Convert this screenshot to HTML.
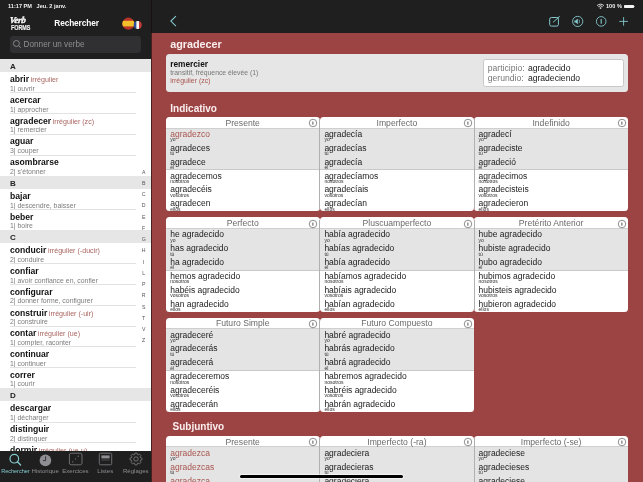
<!DOCTYPE html>
<html><head><meta charset="utf-8"><style>
html,body{margin:0;padding:0;}
body{will-change:transform;width:643px;height:482px;overflow:hidden;position:relative;font-family:"Liberation Sans", sans-serif;background:#9c4444;}
.t{position:absolute;white-space:nowrap;}
.r{position:absolute;}
</style></head><body>
<div class="r" style="left:0.00px;top:0.00px;width:643.00px;height:482.00px;background:#9c4444;"></div>
<div class="r" style="left:0.00px;top:0.00px;width:643.00px;height:33.00px;background:#1f1f1f;"></div>
<div class="r" style="left:0.00px;top:0.00px;width:150.50px;height:482.00px;background:#ffffff;"></div>
<div class="r" style="left:0.00px;top:0.00px;width:150.50px;height:59.20px;background:#1f1f1f;"></div>
<div class="r" style="left:150.70px;top:0.00px;width:1.00px;height:482.00px;background:rgba(20,10,10,0.62);"></div>
<div class="t" style="left:8.00px;top:4.00px;font-size:5.6px;line-height:5.6px;color:#f0f0f0;font-weight:bold;">11:17 PM&nbsp;&nbsp; Jeu. 2 janv.</div>
<div class="t" style="left:606.00px;top:4.00px;font-size:5.6px;line-height:5.6px;color:#f0f0f0;font-weight:bold;">100 %</div>
<svg class="r" style="left:596px;top:3px" width="9" height="6" viewBox="0 0 9 6"><g fill="none" stroke="#f0f0f0" stroke-width="0.9"><path d="M1.1 2.6 A4.8 4.8 0 0 1 7.9 2.6"/><path d="M2.3 3.8 A3.1 3.1 0 0 1 6.7 3.8"/></g><path d="M3.4 4.9 A1.5 1.5 0 0 1 5.6 4.9 L4.5 6 Z" fill="#f0f0f0"/></svg>
<div class="r" style="left:623.80px;top:4.50px;width:10.00px;height:3.60px;background:#f4f4f4;border-radius:0.8px"></div>
<div class="r" style="left:634.40px;top:5.50px;width:0.80px;height:1.60px;background:rgba(255,255,255,0.45);"></div>
<div class="t" style="left:9.30px;top:16.00px;font-size:9.0px;line-height:9.0px;color:#f2f2f2;font-weight:bold;font-family:Liberation Serif,serif;font-style:italic;letter-spacing:-0.3px;transform:skewX(-8deg);transform-origin:0 100%;-webkit-text-stroke:0.35px #fff">Verb</div>
<div class="t" style="left:10.90px;top:24.00px;font-size:7.8px;line-height:7.8px;color:#e8e8e8;font-weight:bold;transform:scaleX(0.69);transform-origin:0 0;-webkit-text-stroke:0.2px #fff">FORMS</div>
<div class="t" style="left:54.30px;top:19.00px;font-size:8.3px;line-height:8.3px;color:#fff;font-weight:bold;letter-spacing:-0.12px">Rechercher</div>
<svg class="r" style="left:120px;top:15px" width="24" height="17" viewBox="0 0 24 17"><defs><clipPath id="es"><circle cx="8.4" cy="8.7" r="6.1"/></clipPath><clipPath id="fr"><circle cx="17.7" cy="10.1" r="4"/></clipPath></defs><g clip-path="url(#es)"><rect x="0" y="0" width="20" height="20" fill="#b8332b"/><rect x="0" y="5.8" width="20" height="5.6" fill="#f2c02a"/></g><g clip-path="url(#fr)"><rect x="13" y="5" width="3.3" height="10" fill="#2a4fa0"/><rect x="16.3" y="5" width="2.8" height="10" fill="#f4f4f4"/><rect x="19.1" y="5" width="4" height="10" fill="#d03a3a"/></g></svg>
<div class="r" style="left:10.00px;top:36.00px;width:131.00px;height:16.50px;background:#303033;border-radius:3.5px"></div>
<svg class="r" style="left:12px;top:39px" width="10" height="10" viewBox="0 0 10 10"><circle cx="4.4" cy="4.5" r="3" fill="none" stroke="#8e8e93" stroke-width="0.9"/><line x1="6.6" y1="6.7" x2="8.8" y2="8.9" stroke="#8e8e93" stroke-width="0.9"/></svg>
<div class="t" style="left:23.60px;top:41.00px;font-size:8.2px;line-height:8.2px;color:#8e8e93;font-weight:normal;">Donner un verbe</div>
<div class="r" style="left:0.00px;top:59.20px;width:150.50px;height:13.00px;background:#e6e6e6;"></div>
<div class="t" style="left:10.00px;top:63.00px;font-size:8.0px;line-height:8.0px;color:#222;font-weight:bold;">A</div>
<div class="t" style="left:10.00px;top:75.00px;font-size:8.6px;line-height:8.6px;color:#111;font-weight:bold;">abrir <span style="font-weight:normal;font-size:7.1px;margin-left:-0.8px;color:#aa6560">irrégulier</span></div>
<div class="t" style="left:10.00px;top:86.00px;font-size:6.9px;line-height:6.9px;color:#7c7c7c;font-weight:normal;">1| ouvrir</div>
<div class="r" style="left:10.00px;top:92.42px;width:126.40px;height:0.50px;background:#e2e2e2;"></div>
<div class="t" style="left:10.00px;top:96.00px;font-size:8.6px;line-height:8.6px;color:#111;font-weight:bold;">acercar</div>
<div class="t" style="left:10.00px;top:107.00px;font-size:6.9px;line-height:6.9px;color:#7c7c7c;font-weight:normal;">1| approcher</div>
<div class="r" style="left:10.00px;top:113.14px;width:126.40px;height:0.50px;background:#e2e2e2;"></div>
<div class="t" style="left:10.00px;top:117.00px;font-size:8.6px;line-height:8.6px;color:#111;font-weight:bold;">agradecer <span style="font-weight:normal;font-size:7.1px;margin-left:-0.8px;color:#aa6560">irrégulier (zc)</span></div>
<div class="t" style="left:10.00px;top:127.00px;font-size:6.9px;line-height:6.9px;color:#7c7c7c;font-weight:normal;">1| remercier</div>
<div class="r" style="left:10.00px;top:133.86px;width:126.40px;height:0.50px;background:#e2e2e2;"></div>
<div class="t" style="left:10.00px;top:137.00px;font-size:8.6px;line-height:8.6px;color:#111;font-weight:bold;">aguar</div>
<div class="t" style="left:10.00px;top:148.00px;font-size:6.9px;line-height:6.9px;color:#7c7c7c;font-weight:normal;">3| couper</div>
<div class="r" style="left:10.00px;top:154.58px;width:126.40px;height:0.50px;background:#e2e2e2;"></div>
<div class="t" style="left:10.00px;top:158.00px;font-size:8.6px;line-height:8.6px;color:#111;font-weight:bold;">asombrarse</div>
<div class="t" style="left:10.00px;top:169.00px;font-size:6.9px;line-height:6.9px;color:#7c7c7c;font-weight:normal;">2| s&#x27;étonner</div>
<div class="r" style="left:0.00px;top:175.80px;width:150.50px;height:13.00px;background:#e6e6e6;"></div>
<div class="t" style="left:10.00px;top:180.00px;font-size:8.0px;line-height:8.0px;color:#222;font-weight:bold;">B</div>
<div class="t" style="left:10.00px;top:192.00px;font-size:8.6px;line-height:8.6px;color:#111;font-weight:bold;">bajar</div>
<div class="t" style="left:10.00px;top:203.00px;font-size:6.9px;line-height:6.9px;color:#7c7c7c;font-weight:normal;">1| descendre, baisser</div>
<div class="r" style="left:10.00px;top:209.02px;width:126.40px;height:0.50px;background:#e2e2e2;"></div>
<div class="t" style="left:10.00px;top:213.00px;font-size:8.6px;line-height:8.6px;color:#111;font-weight:bold;">beber</div>
<div class="t" style="left:10.00px;top:223.00px;font-size:6.9px;line-height:6.9px;color:#7c7c7c;font-weight:normal;">1| boire</div>
<div class="r" style="left:0.00px;top:230.24px;width:150.50px;height:13.00px;background:#e6e6e6;"></div>
<div class="t" style="left:10.00px;top:234.00px;font-size:8.0px;line-height:8.0px;color:#222;font-weight:bold;">C</div>
<div class="t" style="left:10.00px;top:246.00px;font-size:8.6px;line-height:8.6px;color:#111;font-weight:bold;">conducir <span style="font-weight:normal;font-size:7.1px;margin-left:-0.8px;color:#aa6560">irrégulier (-ducir)</span></div>
<div class="t" style="left:10.00px;top:257.00px;font-size:6.9px;line-height:6.9px;color:#7c7c7c;font-weight:normal;">2| conduire</div>
<div class="r" style="left:10.00px;top:263.46px;width:126.40px;height:0.50px;background:#e2e2e2;"></div>
<div class="t" style="left:10.00px;top:267.00px;font-size:8.6px;line-height:8.6px;color:#111;font-weight:bold;">confiar</div>
<div class="t" style="left:10.00px;top:278.00px;font-size:6.9px;line-height:6.9px;color:#7c7c7c;font-weight:normal;">1| avoir confiance en, confier</div>
<div class="r" style="left:10.00px;top:284.18px;width:126.40px;height:0.50px;background:#e2e2e2;"></div>
<div class="t" style="left:10.00px;top:288.00px;font-size:8.6px;line-height:8.6px;color:#111;font-weight:bold;">configurar</div>
<div class="t" style="left:10.00px;top:298.00px;font-size:6.9px;line-height:6.9px;color:#7c7c7c;font-weight:normal;">2| donner forme, configurer</div>
<div class="r" style="left:10.00px;top:304.90px;width:126.40px;height:0.50px;background:#e2e2e2;"></div>
<div class="t" style="left:10.00px;top:309.00px;font-size:8.6px;line-height:8.6px;color:#111;font-weight:bold;">construir <span style="font-weight:normal;font-size:7.1px;margin-left:-0.8px;color:#aa6560">irrégulier (-uir)</span></div>
<div class="t" style="left:10.00px;top:319.00px;font-size:6.9px;line-height:6.9px;color:#7c7c7c;font-weight:normal;">2| construire</div>
<div class="r" style="left:10.00px;top:325.62px;width:126.40px;height:0.50px;background:#e2e2e2;"></div>
<div class="t" style="left:10.00px;top:329.00px;font-size:8.6px;line-height:8.6px;color:#111;font-weight:bold;">contar <span style="font-weight:normal;font-size:7.1px;margin-left:-0.8px;color:#aa6560">irrégulier (ue)</span></div>
<div class="t" style="left:10.00px;top:340.00px;font-size:6.9px;line-height:6.9px;color:#7c7c7c;font-weight:normal;">1| compter, raconter</div>
<div class="r" style="left:10.00px;top:346.34px;width:126.40px;height:0.50px;background:#e2e2e2;"></div>
<div class="t" style="left:10.00px;top:350.00px;font-size:8.6px;line-height:8.6px;color:#111;font-weight:bold;">continuar</div>
<div class="t" style="left:10.00px;top:361.00px;font-size:6.9px;line-height:6.9px;color:#7c7c7c;font-weight:normal;">1| continuer</div>
<div class="r" style="left:10.00px;top:367.06px;width:126.40px;height:0.50px;background:#e2e2e2;"></div>
<div class="t" style="left:10.00px;top:371.00px;font-size:8.6px;line-height:8.6px;color:#111;font-weight:bold;">correr</div>
<div class="t" style="left:10.00px;top:381.00px;font-size:6.9px;line-height:6.9px;color:#7c7c7c;font-weight:normal;">1| courir</div>
<div class="r" style="left:0.00px;top:388.28px;width:150.50px;height:13.00px;background:#e6e6e6;"></div>
<div class="t" style="left:10.00px;top:392.00px;font-size:8.0px;line-height:8.0px;color:#222;font-weight:bold;">D</div>
<div class="t" style="left:10.00px;top:404.00px;font-size:8.6px;line-height:8.6px;color:#111;font-weight:bold;">descargar</div>
<div class="t" style="left:10.00px;top:415.00px;font-size:6.9px;line-height:6.9px;color:#7c7c7c;font-weight:normal;">1| décharger</div>
<div class="r" style="left:10.00px;top:421.50px;width:126.40px;height:0.50px;background:#e2e2e2;"></div>
<div class="t" style="left:10.00px;top:425.00px;font-size:8.6px;line-height:8.6px;color:#111;font-weight:bold;">distinguir</div>
<div class="t" style="left:10.00px;top:436.00px;font-size:6.9px;line-height:6.9px;color:#7c7c7c;font-weight:normal;">2| distinguer</div>
<div class="r" style="left:10.00px;top:442.22px;width:126.40px;height:0.50px;background:#e2e2e2;"></div>
<div class="t" style="left:10.00px;top:446.00px;font-size:8.6px;line-height:8.6px;color:#111;font-weight:bold;">dormir <span style="font-weight:normal;font-size:7.1px;margin-left:-0.8px;color:#aa6560">irrégulier (ue-u)</span></div>
<div class="t" style="left:10.00px;top:456.00px;font-size:6.9px;line-height:6.9px;color:#7c7c7c;font-weight:normal;">1| dormir</div>
<div class="t" style="left:43.70px;width:200px;text-align:center;top:170.00px;font-size:5.2px;line-height:5.2px;color:#555;font-weight:normal;">A</div>
<div class="t" style="left:43.70px;width:200px;text-align:center;top:181.00px;font-size:5.2px;line-height:5.2px;color:#555;font-weight:normal;">B</div>
<div class="t" style="left:43.70px;width:200px;text-align:center;top:192.00px;font-size:5.2px;line-height:5.2px;color:#555;font-weight:normal;">C</div>
<div class="t" style="left:43.70px;width:200px;text-align:center;top:203.00px;font-size:5.2px;line-height:5.2px;color:#555;font-weight:normal;">D</div>
<div class="t" style="left:43.70px;width:200px;text-align:center;top:215.00px;font-size:5.2px;line-height:5.2px;color:#555;font-weight:normal;">E</div>
<div class="t" style="left:43.70px;width:200px;text-align:center;top:226.00px;font-size:5.2px;line-height:5.2px;color:#555;font-weight:normal;">F</div>
<div class="t" style="left:43.70px;width:200px;text-align:center;top:237.00px;font-size:5.2px;line-height:5.2px;color:#555;font-weight:normal;">G</div>
<div class="t" style="left:43.70px;width:200px;text-align:center;top:248.00px;font-size:5.2px;line-height:5.2px;color:#555;font-weight:normal;">H</div>
<div class="t" style="left:43.70px;width:200px;text-align:center;top:260.00px;font-size:5.2px;line-height:5.2px;color:#555;font-weight:normal;">I</div>
<div class="t" style="left:43.70px;width:200px;text-align:center;top:271.00px;font-size:5.2px;line-height:5.2px;color:#555;font-weight:normal;">L</div>
<div class="t" style="left:43.70px;width:200px;text-align:center;top:282.00px;font-size:5.2px;line-height:5.2px;color:#555;font-weight:normal;">P</div>
<div class="t" style="left:43.70px;width:200px;text-align:center;top:293.00px;font-size:5.2px;line-height:5.2px;color:#555;font-weight:normal;">R</div>
<div class="t" style="left:43.70px;width:200px;text-align:center;top:305.00px;font-size:5.2px;line-height:5.2px;color:#555;font-weight:normal;">S</div>
<div class="t" style="left:43.70px;width:200px;text-align:center;top:316.00px;font-size:5.2px;line-height:5.2px;color:#555;font-weight:normal;">T</div>
<div class="t" style="left:43.70px;width:200px;text-align:center;top:327.00px;font-size:5.2px;line-height:5.2px;color:#555;font-weight:normal;">V</div>
<div class="t" style="left:43.70px;width:200px;text-align:center;top:338.00px;font-size:5.2px;line-height:5.2px;color:#555;font-weight:normal;">Z</div>
<div class="r" style="left:0.00px;top:451.00px;width:150.50px;height:31.00px;background:#1f1f1f;"></div>
<div class="t" style="left:-84.60px;width:200px;text-align:center;top:469.00px;font-size:5.6px;line-height:5.6px;color:#84c9ce;font-weight:normal;letter-spacing:-0.05px">Rechercher</div>
<div class="t" style="left:-54.90px;width:200px;text-align:center;top:468.00px;font-size:6.1px;line-height:6.1px;color:#8e8e93;font-weight:normal;">Historique</div>
<div class="t" style="left:-24.60px;width:200px;text-align:center;top:468.00px;font-size:6.1px;line-height:6.1px;color:#8e8e93;font-weight:normal;">Exercices</div>
<div class="t" style="left:5.30px;width:200px;text-align:center;top:468.00px;font-size:6.1px;line-height:6.1px;color:#8e8e93;font-weight:normal;">Listes</div>
<div class="t" style="left:35.80px;width:200px;text-align:center;top:468.00px;font-size:6.1px;line-height:6.1px;color:#8e8e93;font-weight:normal;">Réglages</div>
<svg class="r" style="left:8px;top:452px" width="15" height="15" viewBox="0 0 15 15"><circle cx="6.3" cy="6.7" r="4.3" fill="none" stroke="#84c9ce" stroke-width="1.2"/><line x1="9.4" y1="9.8" x2="12.6" y2="13" stroke="#84c9ce" stroke-width="1.3" stroke-linecap="round"/></svg>
<svg class="r" style="left:39px;top:453.5px" width="13" height="13" viewBox="0 0 13 13"><circle cx="6.4" cy="6.4" r="5.8" fill="#8e8e93"/><path d="M6.6 2.4 V6.6 H4.0" fill="none" stroke="#2a2a2a" stroke-width="0.9"/></svg>
<svg class="r" style="left:68px;top:452px" width="15" height="14" viewBox="0 0 15 14"><rect x="1.4" y="1.2" width="12.6" height="11.6" rx="1.8" fill="none" stroke="#6e6e72" stroke-width="1"/><circle cx="10.2" cy="4.2" r="0.6" fill="#8e8e93"/><circle cx="7.6" cy="7" r="0.6" fill="#8e8e93"/><circle cx="4.8" cy="9.8" r="0.6" fill="#8e8e93"/></svg>
<svg class="r" style="left:98px;top:452px" width="15" height="14" viewBox="0 0 15 14"><rect x="1.3" y="1.2" width="12.4" height="11.6" rx="1.2" fill="none" stroke="#6e6e72" stroke-width="1"/><rect x="3.4" y="3.4" width="8.2" height="3" fill="#8e8e93"/><line x1="3.4" y1="8" x2="11.6" y2="8" stroke="#6e6e72" stroke-width="0.6"/></svg>
<svg class="r" style="left:128.6px;top:452px" width="14" height="14" viewBox="-7 -7 14 14"><g fill="none" stroke="#77777b" stroke-width="0.9" stroke-linejoin="round"><circle r="2.2"/><path d="M4.39 -1.36 L5.91 -1.02 L5.91 1.02 L4.39 1.36 L4.07 2.15 L4.90 3.46 L3.46 4.90 L2.15 4.07 L1.36 4.39 L1.02 5.91 L-1.02 5.91 L-1.36 4.39 L-2.15 4.07 L-3.46 4.90 L-4.90 3.46 L-4.07 2.15 L-4.39 1.36 L-5.91 1.02 L-5.91 -1.02 L-4.39 -1.36 L-4.07 -2.15 L-4.90 -3.46 L-3.46 -4.90 L-2.15 -4.07 L-1.36 -4.39 L-1.02 -5.91 L1.02 -5.91 L1.36 -4.39 L2.15 -4.07 L3.46 -4.90 L4.90 -3.46 L4.07 -2.15 Z"/></g></svg>
<svg class="r" style="left:168px;top:14px" width="10" height="14" viewBox="0 0 10 14"><path d="M7.9 2.1 L2.9 7.1 L7.9 12.1" fill="none" stroke="#84c9ce" stroke-width="1.1"/></svg>
<svg class="r" style="left:546px;top:14px" width="16" height="15" viewBox="546 14 16 15"><rect x="549.7" y="17.5" width="8.7" height="8.6" rx="1.6" fill="none" stroke="#84c9ce" stroke-width="1"/><path d="M553.1 22.3 L559.7 16.3" stroke="#84c9ce" stroke-width="1"/></svg>
<svg class="r" style="left:570px;top:14px" width="16" height="16" viewBox="570 14 16 16"><circle cx="577.7" cy="21.4" r="5.1" fill="none" stroke="#84c9ce" stroke-width="0.9"/><path d="M574.4 20.4 H575.6 L577.8 18.6 V24.2 L575.6 22.4 H574.4 Z" fill="#84c9ce"/><path d="M579 19.6 Q580.1 21.4 579 23.2" fill="none" stroke="#84c9ce" stroke-width="0.7"/></svg>
<svg class="r" style="left:594px;top:14px" width="16" height="16" viewBox="594 14 16 16"><circle cx="601.2" cy="21.4" r="4.8" fill="none" stroke="#84c9ce" stroke-width="0.9"/><line x1="601.2" y1="19.0" x2="601.2" y2="23.8" stroke="#84c9ce" stroke-width="1.1"/></svg>
<svg class="r" style="left:617px;top:14px" width="14" height="14" viewBox="617 14 14 14"><path d="M623.6 17.1 V25.7 M619.3 21.4 H627.9" stroke="#84c9ce" stroke-width="0.9"/></svg>
<div class="t" style="left:170.20px;top:39.00px;font-size:10.8px;line-height:10.8px;color:#fbeeee;font-weight:bold;">agradecer</div>
<div class="r" style="left:165.60px;top:54.10px;width:462.60px;height:37.80px;background:#e6e6e6;border-radius:3.5px"></div>
<div class="t" style="left:170.20px;top:60.00px;font-size:8.3px;line-height:8.3px;color:#111;font-weight:bold;">remercier</div>
<div class="t" style="left:170.20px;top:70.00px;font-size:6.8px;line-height:6.8px;color:#777;font-weight:normal;">transitif, fréquence élevée (1)</div>
<div class="t" style="left:170.20px;top:78.00px;font-size:6.9px;line-height:6.9px;color:#a8554f;font-weight:normal;">irrégulier (zc)</div>
<div class="r" style="left:483.00px;top:59.00px;width:140.90px;height:28.20px;background:#ffffff;border:0.6px solid #c8c8c8;border-radius:2.5px;box-sizing:border-box"></div>
<div class="t" style="left:487.80px;top:64.00px;font-size:8.6px;line-height:8.6px;color:#777;font-weight:normal;">participio:</div>
<div class="t" style="left:527.90px;top:64.00px;font-size:8.6px;line-height:8.6px;color:#1a1a1a;font-weight:normal;">agradecido</div>
<div class="t" style="left:487.80px;top:74.00px;font-size:8.6px;line-height:8.6px;color:#777;font-weight:normal;">gerundio:</div>
<div class="t" style="left:527.90px;top:74.00px;font-size:8.6px;line-height:8.6px;color:#1a1a1a;font-weight:normal;">agradeciendo</div>
<div class="t" style="left:170.30px;top:104.00px;font-size:10.0px;line-height:10.0px;color:#fbeeee;font-weight:bold;">Indicativo</div>
<div class="t" style="left:172.50px;top:422.00px;font-size:10.0px;line-height:10.0px;color:#fbeeee;font-weight:bold;">Subjuntivo</div>
<div class="r" style="left:165.60px;top:116.90px;width:154.20px;height:94.42px;background:#fff;border-radius:3.5px;overflow:hidden">
<div class="r" style="left:0;top:11.20px;width:154.2px;height:41.61px;background:#e4e4e4"></div>
<div class="r" style="left:0;top:10.70px;width:154.2px;height:0.5px;background:#cfcfcf"></div>
<div class="r" style="left:0;top:52.51px;width:154.2px;height:0.6px;background:#c9c9c9"></div>
</div>
<div class="t" style="left:142.70px;width:200px;text-align:center;top:119.00px;font-size:8.6px;line-height:8.6px;color:#6a6a6a;font-weight:normal;">Presente</div>
<svg class="r" style="left:308.40px;top:118.40px" width="10" height="10" viewBox="0 0 10 10"><circle cx="5" cy="5" r="3.75" fill="none" stroke="#6a6a6a" stroke-width="0.75"/><line x1="4.9" y1="3.6" x2="4.9" y2="6.7" stroke="#555" stroke-width="1.0"/></svg>
<div class="t" style="left:170.20px;top:130.00px;font-size:8.5px;line-height:8.5px;color:#a8554f;font-weight:normal;">agradezco</div>
<div class="t" style="left:170.20px;top:137.00px;font-size:5.0px;line-height:5.0px;color:#2e2e2e;font-weight:normal;">yo</div>
<div class="t" style="left:170.20px;top:144.00px;font-size:8.5px;line-height:8.5px;color:#1a1a1a;font-weight:normal;">agradeces</div>
<div class="t" style="left:170.20px;top:151.00px;font-size:5.0px;line-height:5.0px;color:#2e2e2e;font-weight:normal;">tú</div>
<div class="t" style="left:170.20px;top:158.00px;font-size:8.5px;line-height:8.5px;color:#1a1a1a;font-weight:normal;">agradece</div>
<div class="t" style="left:170.20px;top:165.00px;font-size:5.0px;line-height:5.0px;color:#2e2e2e;font-weight:normal;">él</div>
<div class="t" style="left:170.20px;top:172.00px;font-size:8.5px;line-height:8.5px;color:#1a1a1a;font-weight:normal;">agradecemos</div>
<div class="t" style="left:170.20px;top:179.00px;font-size:5.0px;line-height:5.0px;color:#2e2e2e;font-weight:normal;">nosotros</div>
<div class="t" style="left:170.20px;top:185.00px;font-size:8.5px;line-height:8.5px;color:#1a1a1a;font-weight:normal;">agradecéis</div>
<div class="t" style="left:170.20px;top:193.00px;font-size:5.0px;line-height:5.0px;color:#2e2e2e;font-weight:normal;">vosotros</div>
<div class="t" style="left:170.20px;top:199.00px;font-size:8.5px;line-height:8.5px;color:#1a1a1a;font-weight:normal;">agradecen</div>
<div class="t" style="left:170.20px;top:207.00px;font-size:5.0px;line-height:5.0px;color:#2e2e2e;font-weight:normal;">ellos</div>
<div class="r" style="left:319.80px;top:116.90px;width:154.20px;height:94.42px;background:#fff;border-radius:3.5px;overflow:hidden">
<div class="r" style="left:0;top:11.20px;width:154.2px;height:41.61px;background:#e4e4e4"></div>
<div class="r" style="left:0;top:10.70px;width:154.2px;height:0.5px;background:#cfcfcf"></div>
<div class="r" style="left:0;top:52.51px;width:154.2px;height:0.6px;background:#c9c9c9"></div>
</div>
<div class="t" style="left:296.90px;width:200px;text-align:center;top:119.00px;font-size:8.6px;line-height:8.6px;color:#6a6a6a;font-weight:normal;">Imperfecto</div>
<svg class="r" style="left:462.60px;top:118.40px" width="10" height="10" viewBox="0 0 10 10"><circle cx="5" cy="5" r="3.75" fill="none" stroke="#6a6a6a" stroke-width="0.75"/><line x1="4.9" y1="3.6" x2="4.9" y2="6.7" stroke="#555" stroke-width="1.0"/></svg>
<div class="t" style="left:324.40px;top:130.00px;font-size:8.5px;line-height:8.5px;color:#1a1a1a;font-weight:normal;">agradecía</div>
<div class="t" style="left:324.40px;top:137.00px;font-size:5.0px;line-height:5.0px;color:#2e2e2e;font-weight:normal;">yo</div>
<div class="t" style="left:324.40px;top:144.00px;font-size:8.5px;line-height:8.5px;color:#1a1a1a;font-weight:normal;">agradecías</div>
<div class="t" style="left:324.40px;top:151.00px;font-size:5.0px;line-height:5.0px;color:#2e2e2e;font-weight:normal;">tú</div>
<div class="t" style="left:324.40px;top:158.00px;font-size:8.5px;line-height:8.5px;color:#1a1a1a;font-weight:normal;">agradecía</div>
<div class="t" style="left:324.40px;top:165.00px;font-size:5.0px;line-height:5.0px;color:#2e2e2e;font-weight:normal;">él</div>
<div class="t" style="left:324.40px;top:172.00px;font-size:8.5px;line-height:8.5px;color:#1a1a1a;font-weight:normal;">agradecíamos</div>
<div class="t" style="left:324.40px;top:179.00px;font-size:5.0px;line-height:5.0px;color:#2e2e2e;font-weight:normal;">nosotros</div>
<div class="t" style="left:324.40px;top:185.00px;font-size:8.5px;line-height:8.5px;color:#1a1a1a;font-weight:normal;">agradecíais</div>
<div class="t" style="left:324.40px;top:193.00px;font-size:5.0px;line-height:5.0px;color:#2e2e2e;font-weight:normal;">vosotros</div>
<div class="t" style="left:324.40px;top:199.00px;font-size:8.5px;line-height:8.5px;color:#1a1a1a;font-weight:normal;">agradecían</div>
<div class="t" style="left:324.40px;top:207.00px;font-size:5.0px;line-height:5.0px;color:#2e2e2e;font-weight:normal;">ellos</div>
<div class="r" style="left:474.00px;top:116.90px;width:154.20px;height:94.42px;background:#fff;border-radius:3.5px;overflow:hidden">
<div class="r" style="left:0;top:11.20px;width:154.2px;height:41.61px;background:#e4e4e4"></div>
<div class="r" style="left:0;top:10.70px;width:154.2px;height:0.5px;background:#cfcfcf"></div>
<div class="r" style="left:0;top:52.51px;width:154.2px;height:0.6px;background:#c9c9c9"></div>
</div>
<div class="t" style="left:451.10px;width:200px;text-align:center;top:119.00px;font-size:8.6px;line-height:8.6px;color:#6a6a6a;font-weight:normal;">Indefinido</div>
<svg class="r" style="left:616.80px;top:118.40px" width="10" height="10" viewBox="0 0 10 10"><circle cx="5" cy="5" r="3.75" fill="none" stroke="#6a6a6a" stroke-width="0.75"/><line x1="4.9" y1="3.6" x2="4.9" y2="6.7" stroke="#555" stroke-width="1.0"/></svg>
<div class="t" style="left:478.60px;top:130.00px;font-size:8.5px;line-height:8.5px;color:#1a1a1a;font-weight:normal;">agradecí</div>
<div class="t" style="left:478.60px;top:137.00px;font-size:5.0px;line-height:5.0px;color:#2e2e2e;font-weight:normal;">yo</div>
<div class="t" style="left:478.60px;top:144.00px;font-size:8.5px;line-height:8.5px;color:#1a1a1a;font-weight:normal;">agradeciste</div>
<div class="t" style="left:478.60px;top:151.00px;font-size:5.0px;line-height:5.0px;color:#2e2e2e;font-weight:normal;">tú</div>
<div class="t" style="left:478.60px;top:158.00px;font-size:8.5px;line-height:8.5px;color:#1a1a1a;font-weight:normal;">agradeció</div>
<div class="t" style="left:478.60px;top:165.00px;font-size:5.0px;line-height:5.0px;color:#2e2e2e;font-weight:normal;">él</div>
<div class="t" style="left:478.60px;top:172.00px;font-size:8.5px;line-height:8.5px;color:#1a1a1a;font-weight:normal;">agradecimos</div>
<div class="t" style="left:478.60px;top:179.00px;font-size:5.0px;line-height:5.0px;color:#2e2e2e;font-weight:normal;">nosotros</div>
<div class="t" style="left:478.60px;top:185.00px;font-size:8.5px;line-height:8.5px;color:#1a1a1a;font-weight:normal;">agradecisteis</div>
<div class="t" style="left:478.60px;top:193.00px;font-size:5.0px;line-height:5.0px;color:#2e2e2e;font-weight:normal;">vosotros</div>
<div class="t" style="left:478.60px;top:199.00px;font-size:8.5px;line-height:8.5px;color:#1a1a1a;font-weight:normal;">agradecieron</div>
<div class="t" style="left:478.60px;top:207.00px;font-size:5.0px;line-height:5.0px;color:#2e2e2e;font-weight:normal;">ellos</div>
<div class="r" style="left:319.45px;top:119.10px;width:0.70px;height:90.02px;background:#b0b0b0;"></div>
<div class="r" style="left:473.65px;top:119.10px;width:0.70px;height:90.02px;background:#b0b0b0;"></div>
<div class="r" style="left:165.60px;top:217.30px;width:154.20px;height:94.42px;background:#fff;border-radius:3.5px;overflow:hidden">
<div class="r" style="left:0;top:11.20px;width:154.2px;height:41.61px;background:#e4e4e4"></div>
<div class="r" style="left:0;top:10.70px;width:154.2px;height:0.5px;background:#cfcfcf"></div>
<div class="r" style="left:0;top:52.51px;width:154.2px;height:0.6px;background:#c9c9c9"></div>
</div>
<div class="t" style="left:142.70px;width:200px;text-align:center;top:219.00px;font-size:8.6px;line-height:8.6px;color:#6a6a6a;font-weight:normal;">Perfecto</div>
<svg class="r" style="left:308.40px;top:218.80px" width="10" height="10" viewBox="0 0 10 10"><circle cx="5" cy="5" r="3.75" fill="none" stroke="#6a6a6a" stroke-width="0.75"/><line x1="4.9" y1="3.6" x2="4.9" y2="6.7" stroke="#555" stroke-width="1.0"/></svg>
<div class="t" style="left:170.20px;top:230.00px;font-size:8.5px;line-height:8.5px;color:#1a1a1a;font-weight:normal;">he agradecido</div>
<div class="t" style="left:170.20px;top:238.00px;font-size:5.0px;line-height:5.0px;color:#2e2e2e;font-weight:normal;">yo</div>
<div class="t" style="left:170.20px;top:244.00px;font-size:8.5px;line-height:8.5px;color:#1a1a1a;font-weight:normal;">has agradecido</div>
<div class="t" style="left:170.20px;top:252.00px;font-size:5.0px;line-height:5.0px;color:#2e2e2e;font-weight:normal;">tú</div>
<div class="t" style="left:170.20px;top:258.00px;font-size:8.5px;line-height:8.5px;color:#1a1a1a;font-weight:normal;">ha agradecido</div>
<div class="t" style="left:170.20px;top:265.00px;font-size:5.0px;line-height:5.0px;color:#2e2e2e;font-weight:normal;">él</div>
<div class="t" style="left:170.20px;top:272.00px;font-size:8.5px;line-height:8.5px;color:#1a1a1a;font-weight:normal;">hemos agradecido</div>
<div class="t" style="left:170.20px;top:279.00px;font-size:5.0px;line-height:5.0px;color:#2e2e2e;font-weight:normal;">nosotros</div>
<div class="t" style="left:170.20px;top:286.00px;font-size:8.5px;line-height:8.5px;color:#1a1a1a;font-weight:normal;">habéis agradecido</div>
<div class="t" style="left:170.20px;top:293.00px;font-size:5.0px;line-height:5.0px;color:#2e2e2e;font-weight:normal;">vosotros</div>
<div class="t" style="left:170.20px;top:300.00px;font-size:8.5px;line-height:8.5px;color:#1a1a1a;font-weight:normal;">han agradecido</div>
<div class="t" style="left:170.20px;top:307.00px;font-size:5.0px;line-height:5.0px;color:#2e2e2e;font-weight:normal;">ellos</div>
<div class="r" style="left:319.80px;top:217.30px;width:154.20px;height:94.42px;background:#fff;border-radius:3.5px;overflow:hidden">
<div class="r" style="left:0;top:11.20px;width:154.2px;height:41.61px;background:#e4e4e4"></div>
<div class="r" style="left:0;top:10.70px;width:154.2px;height:0.5px;background:#cfcfcf"></div>
<div class="r" style="left:0;top:52.51px;width:154.2px;height:0.6px;background:#c9c9c9"></div>
</div>
<div class="t" style="left:296.90px;width:200px;text-align:center;top:219.00px;font-size:8.6px;line-height:8.6px;color:#6a6a6a;font-weight:normal;">Pluscuamperfecto</div>
<svg class="r" style="left:462.60px;top:218.80px" width="10" height="10" viewBox="0 0 10 10"><circle cx="5" cy="5" r="3.75" fill="none" stroke="#6a6a6a" stroke-width="0.75"/><line x1="4.9" y1="3.6" x2="4.9" y2="6.7" stroke="#555" stroke-width="1.0"/></svg>
<div class="t" style="left:324.40px;top:230.00px;font-size:8.5px;line-height:8.5px;color:#1a1a1a;font-weight:normal;">había agradecido</div>
<div class="t" style="left:324.40px;top:238.00px;font-size:5.0px;line-height:5.0px;color:#2e2e2e;font-weight:normal;">yo</div>
<div class="t" style="left:324.40px;top:244.00px;font-size:8.5px;line-height:8.5px;color:#1a1a1a;font-weight:normal;">habías agradecido</div>
<div class="t" style="left:324.40px;top:252.00px;font-size:5.0px;line-height:5.0px;color:#2e2e2e;font-weight:normal;">tú</div>
<div class="t" style="left:324.40px;top:258.00px;font-size:8.5px;line-height:8.5px;color:#1a1a1a;font-weight:normal;">había agradecido</div>
<div class="t" style="left:324.40px;top:265.00px;font-size:5.0px;line-height:5.0px;color:#2e2e2e;font-weight:normal;">él</div>
<div class="t" style="left:324.40px;top:272.00px;font-size:8.5px;line-height:8.5px;color:#1a1a1a;font-weight:normal;">habíamos agradecido</div>
<div class="t" style="left:324.40px;top:279.00px;font-size:5.0px;line-height:5.0px;color:#2e2e2e;font-weight:normal;">nosotros</div>
<div class="t" style="left:324.40px;top:286.00px;font-size:8.5px;line-height:8.5px;color:#1a1a1a;font-weight:normal;">habíais agradecido</div>
<div class="t" style="left:324.40px;top:293.00px;font-size:5.0px;line-height:5.0px;color:#2e2e2e;font-weight:normal;">vosotros</div>
<div class="t" style="left:324.40px;top:300.00px;font-size:8.5px;line-height:8.5px;color:#1a1a1a;font-weight:normal;">habían agradecido</div>
<div class="t" style="left:324.40px;top:307.00px;font-size:5.0px;line-height:5.0px;color:#2e2e2e;font-weight:normal;">ellos</div>
<div class="r" style="left:474.00px;top:217.30px;width:154.20px;height:94.42px;background:#fff;border-radius:3.5px;overflow:hidden">
<div class="r" style="left:0;top:11.20px;width:154.2px;height:41.61px;background:#e4e4e4"></div>
<div class="r" style="left:0;top:10.70px;width:154.2px;height:0.5px;background:#cfcfcf"></div>
<div class="r" style="left:0;top:52.51px;width:154.2px;height:0.6px;background:#c9c9c9"></div>
</div>
<div class="t" style="left:451.10px;width:200px;text-align:center;top:219.00px;font-size:8.6px;line-height:8.6px;color:#6a6a6a;font-weight:normal;">Pretérito Anterior</div>
<svg class="r" style="left:616.80px;top:218.80px" width="10" height="10" viewBox="0 0 10 10"><circle cx="5" cy="5" r="3.75" fill="none" stroke="#6a6a6a" stroke-width="0.75"/><line x1="4.9" y1="3.6" x2="4.9" y2="6.7" stroke="#555" stroke-width="1.0"/></svg>
<div class="t" style="left:478.60px;top:230.00px;font-size:8.5px;line-height:8.5px;color:#1a1a1a;font-weight:normal;">hube agradecido</div>
<div class="t" style="left:478.60px;top:238.00px;font-size:5.0px;line-height:5.0px;color:#2e2e2e;font-weight:normal;">yo</div>
<div class="t" style="left:478.60px;top:244.00px;font-size:8.5px;line-height:8.5px;color:#1a1a1a;font-weight:normal;">hubiste agradecido</div>
<div class="t" style="left:478.60px;top:252.00px;font-size:5.0px;line-height:5.0px;color:#2e2e2e;font-weight:normal;">tú</div>
<div class="t" style="left:478.60px;top:258.00px;font-size:8.5px;line-height:8.5px;color:#1a1a1a;font-weight:normal;">hubo agradecido</div>
<div class="t" style="left:478.60px;top:265.00px;font-size:5.0px;line-height:5.0px;color:#2e2e2e;font-weight:normal;">él</div>
<div class="t" style="left:478.60px;top:272.00px;font-size:8.5px;line-height:8.5px;color:#1a1a1a;font-weight:normal;">hubimos agradecido</div>
<div class="t" style="left:478.60px;top:279.00px;font-size:5.0px;line-height:5.0px;color:#2e2e2e;font-weight:normal;">nosotros</div>
<div class="t" style="left:478.60px;top:286.00px;font-size:8.5px;line-height:8.5px;color:#1a1a1a;font-weight:normal;">hubisteis agradecido</div>
<div class="t" style="left:478.60px;top:293.00px;font-size:5.0px;line-height:5.0px;color:#2e2e2e;font-weight:normal;">vosotros</div>
<div class="t" style="left:478.60px;top:300.00px;font-size:8.5px;line-height:8.5px;color:#1a1a1a;font-weight:normal;">hubieron agradecido</div>
<div class="t" style="left:478.60px;top:307.00px;font-size:5.0px;line-height:5.0px;color:#2e2e2e;font-weight:normal;">ellos</div>
<div class="r" style="left:319.45px;top:219.50px;width:0.70px;height:90.02px;background:#b0b0b0;"></div>
<div class="r" style="left:473.65px;top:219.50px;width:0.70px;height:90.02px;background:#b0b0b0;"></div>
<div class="r" style="left:165.60px;top:317.50px;width:154.20px;height:94.42px;background:#fff;border-radius:3.5px;overflow:hidden">
<div class="r" style="left:0;top:11.20px;width:154.2px;height:41.61px;background:#e4e4e4"></div>
<div class="r" style="left:0;top:10.70px;width:154.2px;height:0.5px;background:#cfcfcf"></div>
<div class="r" style="left:0;top:52.51px;width:154.2px;height:0.6px;background:#c9c9c9"></div>
</div>
<div class="t" style="left:142.70px;width:200px;text-align:center;top:319.00px;font-size:8.6px;line-height:8.6px;color:#6a6a6a;font-weight:normal;">Futuro Simple</div>
<svg class="r" style="left:308.40px;top:319.00px" width="10" height="10" viewBox="0 0 10 10"><circle cx="5" cy="5" r="3.75" fill="none" stroke="#6a6a6a" stroke-width="0.75"/><line x1="4.9" y1="3.6" x2="4.9" y2="6.7" stroke="#555" stroke-width="1.0"/></svg>
<div class="t" style="left:170.20px;top:331.00px;font-size:8.5px;line-height:8.5px;color:#1a1a1a;font-weight:normal;">agradeceré</div>
<div class="t" style="left:170.20px;top:338.00px;font-size:5.0px;line-height:5.0px;color:#2e2e2e;font-weight:normal;">yo</div>
<div class="t" style="left:170.20px;top:344.00px;font-size:8.5px;line-height:8.5px;color:#1a1a1a;font-weight:normal;">agradecerás</div>
<div class="t" style="left:170.20px;top:352.00px;font-size:5.0px;line-height:5.0px;color:#2e2e2e;font-weight:normal;">tú</div>
<div class="t" style="left:170.20px;top:358.00px;font-size:8.5px;line-height:8.5px;color:#1a1a1a;font-weight:normal;">agradecerá</div>
<div class="t" style="left:170.20px;top:366.00px;font-size:5.0px;line-height:5.0px;color:#2e2e2e;font-weight:normal;">él</div>
<div class="t" style="left:170.20px;top:372.00px;font-size:8.5px;line-height:8.5px;color:#1a1a1a;font-weight:normal;">agradeceremos</div>
<div class="t" style="left:170.20px;top:380.00px;font-size:5.0px;line-height:5.0px;color:#2e2e2e;font-weight:normal;">nosotros</div>
<div class="t" style="left:170.20px;top:386.00px;font-size:8.5px;line-height:8.5px;color:#1a1a1a;font-weight:normal;">agradeceréis</div>
<div class="t" style="left:170.20px;top:393.00px;font-size:5.0px;line-height:5.0px;color:#2e2e2e;font-weight:normal;">vosotros</div>
<div class="t" style="left:170.20px;top:400.00px;font-size:8.5px;line-height:8.5px;color:#1a1a1a;font-weight:normal;">agradecerán</div>
<div class="t" style="left:170.20px;top:407.00px;font-size:5.0px;line-height:5.0px;color:#2e2e2e;font-weight:normal;">ellos</div>
<div class="r" style="left:319.80px;top:317.50px;width:154.20px;height:94.42px;background:#fff;border-radius:3.5px;overflow:hidden">
<div class="r" style="left:0;top:11.20px;width:154.2px;height:41.61px;background:#e4e4e4"></div>
<div class="r" style="left:0;top:10.70px;width:154.2px;height:0.5px;background:#cfcfcf"></div>
<div class="r" style="left:0;top:52.51px;width:154.2px;height:0.6px;background:#c9c9c9"></div>
</div>
<div class="t" style="left:296.90px;width:200px;text-align:center;top:319.00px;font-size:8.6px;line-height:8.6px;color:#6a6a6a;font-weight:normal;">Futuro Compuesto</div>
<svg class="r" style="left:462.60px;top:319.00px" width="10" height="10" viewBox="0 0 10 10"><circle cx="5" cy="5" r="3.75" fill="none" stroke="#6a6a6a" stroke-width="0.75"/><line x1="4.9" y1="3.6" x2="4.9" y2="6.7" stroke="#555" stroke-width="1.0"/></svg>
<div class="t" style="left:324.40px;top:331.00px;font-size:8.5px;line-height:8.5px;color:#1a1a1a;font-weight:normal;">habré agradecido</div>
<div class="t" style="left:324.40px;top:338.00px;font-size:5.0px;line-height:5.0px;color:#2e2e2e;font-weight:normal;">yo</div>
<div class="t" style="left:324.40px;top:344.00px;font-size:8.5px;line-height:8.5px;color:#1a1a1a;font-weight:normal;">habrás agradecido</div>
<div class="t" style="left:324.40px;top:352.00px;font-size:5.0px;line-height:5.0px;color:#2e2e2e;font-weight:normal;">tú</div>
<div class="t" style="left:324.40px;top:358.00px;font-size:8.5px;line-height:8.5px;color:#1a1a1a;font-weight:normal;">habrá agradecido</div>
<div class="t" style="left:324.40px;top:366.00px;font-size:5.0px;line-height:5.0px;color:#2e2e2e;font-weight:normal;">él</div>
<div class="t" style="left:324.40px;top:372.00px;font-size:8.5px;line-height:8.5px;color:#1a1a1a;font-weight:normal;">habremos agradecido</div>
<div class="t" style="left:324.40px;top:380.00px;font-size:5.0px;line-height:5.0px;color:#2e2e2e;font-weight:normal;">nosotros</div>
<div class="t" style="left:324.40px;top:386.00px;font-size:8.5px;line-height:8.5px;color:#1a1a1a;font-weight:normal;">habréis agradecido</div>
<div class="t" style="left:324.40px;top:393.00px;font-size:5.0px;line-height:5.0px;color:#2e2e2e;font-weight:normal;">vosotros</div>
<div class="t" style="left:324.40px;top:400.00px;font-size:8.5px;line-height:8.5px;color:#1a1a1a;font-weight:normal;">habrán agradecido</div>
<div class="t" style="left:324.40px;top:407.00px;font-size:5.0px;line-height:5.0px;color:#2e2e2e;font-weight:normal;">ellos</div>
<div class="r" style="left:319.45px;top:319.70px;width:0.70px;height:90.02px;background:#b0b0b0;"></div>
<div class="r" style="left:165.60px;top:435.70px;width:154.20px;height:94.42px;background:#fff;border-radius:3.5px;overflow:hidden">
<div class="r" style="left:0;top:11.20px;width:154.2px;height:41.61px;background:#e4e4e4"></div>
<div class="r" style="left:0;top:10.70px;width:154.2px;height:0.5px;background:#cfcfcf"></div>
<div class="r" style="left:0;top:52.51px;width:154.2px;height:0.6px;background:#c9c9c9"></div>
</div>
<div class="t" style="left:142.70px;width:200px;text-align:center;top:438.00px;font-size:8.6px;line-height:8.6px;color:#6a6a6a;font-weight:normal;">Presente</div>
<svg class="r" style="left:308.40px;top:437.20px" width="10" height="10" viewBox="0 0 10 10"><circle cx="5" cy="5" r="3.75" fill="none" stroke="#6a6a6a" stroke-width="0.75"/><line x1="4.9" y1="3.6" x2="4.9" y2="6.7" stroke="#555" stroke-width="1.0"/></svg>
<div class="t" style="left:170.20px;top:449.00px;font-size:8.5px;line-height:8.5px;color:#a8554f;font-weight:normal;">agradezca</div>
<div class="t" style="left:170.20px;top:456.00px;font-size:5.0px;line-height:5.0px;color:#2e2e2e;font-weight:normal;">yo</div>
<div class="t" style="left:170.20px;top:463.00px;font-size:8.5px;line-height:8.5px;color:#a8554f;font-weight:normal;">agradezcas</div>
<div class="t" style="left:170.20px;top:470.00px;font-size:5.0px;line-height:5.0px;color:#2e2e2e;font-weight:normal;">tú</div>
<div class="t" style="left:170.20px;top:477.00px;font-size:8.5px;line-height:8.5px;color:#a8554f;font-weight:normal;">agradezca</div>
<div class="t" style="left:170.20px;top:484.00px;font-size:5.0px;line-height:5.0px;color:#2e2e2e;font-weight:normal;">él</div>
<div class="t" style="left:170.20px;top:490.00px;font-size:8.5px;line-height:8.5px;color:#a8554f;font-weight:normal;">agradezcamos</div>
<div class="t" style="left:170.20px;top:498.00px;font-size:5.0px;line-height:5.0px;color:#2e2e2e;font-weight:normal;">nosotros</div>
<div class="t" style="left:170.20px;top:504.00px;font-size:8.5px;line-height:8.5px;color:#a8554f;font-weight:normal;">agradezcáis</div>
<div class="t" style="left:170.20px;top:512.00px;font-size:5.0px;line-height:5.0px;color:#2e2e2e;font-weight:normal;">vosotros</div>
<div class="t" style="left:170.20px;top:518.00px;font-size:8.5px;line-height:8.5px;color:#a8554f;font-weight:normal;">agradezcan</div>
<div class="t" style="left:170.20px;top:525.00px;font-size:5.0px;line-height:5.0px;color:#2e2e2e;font-weight:normal;">ellos</div>
<div class="r" style="left:319.80px;top:435.70px;width:154.20px;height:94.42px;background:#fff;border-radius:3.5px;overflow:hidden">
<div class="r" style="left:0;top:11.20px;width:154.2px;height:41.61px;background:#e4e4e4"></div>
<div class="r" style="left:0;top:10.70px;width:154.2px;height:0.5px;background:#cfcfcf"></div>
<div class="r" style="left:0;top:52.51px;width:154.2px;height:0.6px;background:#c9c9c9"></div>
</div>
<div class="t" style="left:296.90px;width:200px;text-align:center;top:438.00px;font-size:8.6px;line-height:8.6px;color:#6a6a6a;font-weight:normal;">Imperfecto (-ra)</div>
<svg class="r" style="left:462.60px;top:437.20px" width="10" height="10" viewBox="0 0 10 10"><circle cx="5" cy="5" r="3.75" fill="none" stroke="#6a6a6a" stroke-width="0.75"/><line x1="4.9" y1="3.6" x2="4.9" y2="6.7" stroke="#555" stroke-width="1.0"/></svg>
<div class="t" style="left:324.40px;top:449.00px;font-size:8.5px;line-height:8.5px;color:#1a1a1a;font-weight:normal;">agradeciera</div>
<div class="t" style="left:324.40px;top:456.00px;font-size:5.0px;line-height:5.0px;color:#2e2e2e;font-weight:normal;">yo</div>
<div class="t" style="left:324.40px;top:463.00px;font-size:8.5px;line-height:8.5px;color:#1a1a1a;font-weight:normal;">agradecieras</div>
<div class="t" style="left:324.40px;top:470.00px;font-size:5.0px;line-height:5.0px;color:#2e2e2e;font-weight:normal;">tú</div>
<div class="t" style="left:324.40px;top:477.00px;font-size:8.5px;line-height:8.5px;color:#1a1a1a;font-weight:normal;">agradeciera</div>
<div class="t" style="left:324.40px;top:484.00px;font-size:5.0px;line-height:5.0px;color:#2e2e2e;font-weight:normal;">él</div>
<div class="t" style="left:324.40px;top:490.00px;font-size:8.5px;line-height:8.5px;color:#1a1a1a;font-weight:normal;">agradeciéramos</div>
<div class="t" style="left:324.40px;top:498.00px;font-size:5.0px;line-height:5.0px;color:#2e2e2e;font-weight:normal;">nosotros</div>
<div class="t" style="left:324.40px;top:504.00px;font-size:8.5px;line-height:8.5px;color:#1a1a1a;font-weight:normal;">agradecierais</div>
<div class="t" style="left:324.40px;top:512.00px;font-size:5.0px;line-height:5.0px;color:#2e2e2e;font-weight:normal;">vosotros</div>
<div class="t" style="left:324.40px;top:518.00px;font-size:8.5px;line-height:8.5px;color:#1a1a1a;font-weight:normal;">agradecieran</div>
<div class="t" style="left:324.40px;top:525.00px;font-size:5.0px;line-height:5.0px;color:#2e2e2e;font-weight:normal;">ellos</div>
<div class="r" style="left:474.00px;top:435.70px;width:154.20px;height:94.42px;background:#fff;border-radius:3.5px;overflow:hidden">
<div class="r" style="left:0;top:11.20px;width:154.2px;height:41.61px;background:#e4e4e4"></div>
<div class="r" style="left:0;top:10.70px;width:154.2px;height:0.5px;background:#cfcfcf"></div>
<div class="r" style="left:0;top:52.51px;width:154.2px;height:0.6px;background:#c9c9c9"></div>
</div>
<div class="t" style="left:451.10px;width:200px;text-align:center;top:438.00px;font-size:8.6px;line-height:8.6px;color:#6a6a6a;font-weight:normal;">Imperfecto (-se)</div>
<svg class="r" style="left:616.80px;top:437.20px" width="10" height="10" viewBox="0 0 10 10"><circle cx="5" cy="5" r="3.75" fill="none" stroke="#6a6a6a" stroke-width="0.75"/><line x1="4.9" y1="3.6" x2="4.9" y2="6.7" stroke="#555" stroke-width="1.0"/></svg>
<div class="t" style="left:478.60px;top:449.00px;font-size:8.5px;line-height:8.5px;color:#1a1a1a;font-weight:normal;">agradeciese</div>
<div class="t" style="left:478.60px;top:456.00px;font-size:5.0px;line-height:5.0px;color:#2e2e2e;font-weight:normal;">yo</div>
<div class="t" style="left:478.60px;top:463.00px;font-size:8.5px;line-height:8.5px;color:#1a1a1a;font-weight:normal;">agradecieses</div>
<div class="t" style="left:478.60px;top:470.00px;font-size:5.0px;line-height:5.0px;color:#2e2e2e;font-weight:normal;">tú</div>
<div class="t" style="left:478.60px;top:477.00px;font-size:8.5px;line-height:8.5px;color:#1a1a1a;font-weight:normal;">agradeciese</div>
<div class="t" style="left:478.60px;top:484.00px;font-size:5.0px;line-height:5.0px;color:#2e2e2e;font-weight:normal;">él</div>
<div class="t" style="left:478.60px;top:490.00px;font-size:8.5px;line-height:8.5px;color:#1a1a1a;font-weight:normal;">agradeciésemos</div>
<div class="t" style="left:478.60px;top:498.00px;font-size:5.0px;line-height:5.0px;color:#2e2e2e;font-weight:normal;">nosotros</div>
<div class="t" style="left:478.60px;top:504.00px;font-size:8.5px;line-height:8.5px;color:#1a1a1a;font-weight:normal;">agradecieseis</div>
<div class="t" style="left:478.60px;top:512.00px;font-size:5.0px;line-height:5.0px;color:#2e2e2e;font-weight:normal;">vosotros</div>
<div class="t" style="left:478.60px;top:518.00px;font-size:8.5px;line-height:8.5px;color:#1a1a1a;font-weight:normal;">agradeciesen</div>
<div class="t" style="left:478.60px;top:525.00px;font-size:5.0px;line-height:5.0px;color:#2e2e2e;font-weight:normal;">ellos</div>
<div class="r" style="left:319.45px;top:437.90px;width:0.70px;height:90.02px;background:#b0b0b0;"></div>
<div class="r" style="left:473.65px;top:437.90px;width:0.70px;height:90.02px;background:#b0b0b0;"></div>
<div class="r" style="left:240.00px;top:475.30px;width:162.50px;height:2.90px;background:#000;border-radius:1.5px;box-shadow:0 0 1.2px 0.8px rgba(255,255,255,0.8)"></div>
</body></html>
